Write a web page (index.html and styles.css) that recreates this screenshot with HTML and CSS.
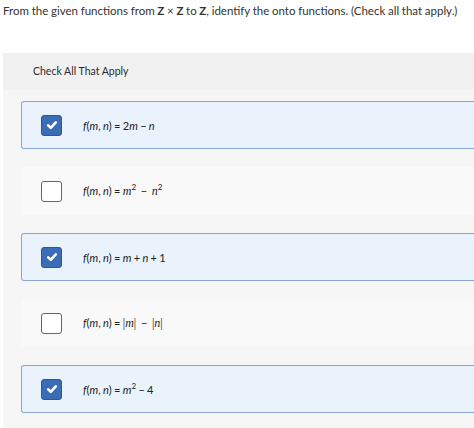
FILE: index.html
```html
<!DOCTYPE html>
<html>
<head>
<meta charset="utf-8">
<link rel="stylesheet" href="styles.css">
</head>
<body>
<p class="prompt">From the given functions from <b>Z</b> × <b>Z</b> to <b>Z</b>, identify the onto functions. (Check all that apply.)</p>
<div class="panel">
  <div class="panel-head">Check All That Apply</div>
  <div class="options">
    <div class="option checked">
      <span class="box"><svg viewBox="0 0 12 12" width="12" height="12"><path d="M2.2 6.4 L4.8 8.8 L9.8 3.4" fill="none" stroke="#fff" stroke-width="2.6" stroke-linecap="round" stroke-linejoin="round"/></svg></span>
      <span class="math"><i>f</i>(<i>m</i>, <i>n</i>) = 2<i>m</i> − <i>n</i></span>
    </div>
    <div class="option">
      <span class="box"></span>
      <span class="math"><i>f</i>(<i>m</i>, <i>n</i>) = <i class="s">m</i><sup>2</sup> &nbsp;−&nbsp; <i class="s">n</i><sup>2</sup></span>
    </div>
    <div class="option checked">
      <span class="box"><svg viewBox="0 0 12 12" width="12" height="12"><path d="M2.2 6.4 L4.8 8.8 L9.8 3.4" fill="none" stroke="#fff" stroke-width="2.6" stroke-linecap="round" stroke-linejoin="round"/></svg></span>
      <span class="math"><i>f</i>(<i>m</i>, <i>n</i>) = <i>m</i> + <i>n</i> + 1</span>
    </div>
    <div class="option">
      <span class="box"></span>
      <span class="math"><i>f</i>(<i>m</i>, <i>n</i>) = <span class="s">|<i>m</i>|</span> &nbsp;−&nbsp; <span class="s">|<i>n</i>|</span></span>
    </div>
    <div class="option checked">
      <span class="box"><svg viewBox="0 0 12 12" width="12" height="12"><path d="M2.2 6.4 L4.8 8.8 L9.8 3.4" fill="none" stroke="#fff" stroke-width="2.6" stroke-linecap="round" stroke-linejoin="round"/></svg></span>
      <span class="math"><i>f</i>(<i>m</i>, <i>n</i>) = <i>m</i><sup>2</sup> − 4</span>
    </div>
  </div>
</div>
</body>
</html>
```

FILE: styles.css
```css
html, body {
  margin: 0;
  padding: 0;
  background: #ffffff;
  overflow: hidden;
}
body {
  width: 474px;
  height: 428px;
  font-family: Lato, "Liberation Sans", Arial, sans-serif;
  color: #333;
}
.prompt {
  margin: 0;
  padding: 2px 0 0 3px;
  font-size: 11.5px;
  word-spacing: -0.25px;
  line-height: 18px;
  color: #333;
  white-space: nowrap;
}
.prompt b {
  font-weight: bold;
}
.panel {
  margin: 33px 0 0 3px;
  background: #f6f6f6;
  width: 474px;
  height: 380px;
}
.panel-head {
  height: 37px;
  background: #f1f1f1;
  padding-left: 30px;
  font-size: 10.5px;
  line-height: 37px;
  color: #2b2b2b;
}
.options {
  padding: 11px 0 0 18px;
  display: flex;
  flex-direction: column;
  gap: 18px;
}
.option {
  height: 48px;
  box-sizing: border-box;
  display: flex;
  align-items: center;
  padding-left: 19px;
  background: #f9f9f9;
  border: 1px solid transparent;
  border-radius: 3px;
}
.option.checked {
  background: #eaf3fb;
  border-color: #8ea5be;
  border-bottom-color: #8aa6d2;
}
.box {
  width: 21px;
  height: 21px;
  box-sizing: border-box;
  border: 1.5px solid #5c6876;
  border-radius: 3px;
  background: #fff;
  display: flex;
  align-items: center;
  justify-content: center;
  flex: none;
}
.checked .box {
  background: #3b6db6;
  border: 1px solid #2d5897;
}
.math {
  margin-left: 21px;
  font-size: 11px;
  word-spacing: -0.5px;
  color: #222;
  font-family: Lato, "Liberation Sans", Arial, sans-serif;
}
.math i {
  font-style: italic;
}
.math .s, .math .s i {
  font-family: "Liberation Serif", "Times New Roman", serif;
  font-size: 12px;
}
.math sup {
  font-size: 8px;
  vertical-align: 5px;
  line-height: 0;
}
```
